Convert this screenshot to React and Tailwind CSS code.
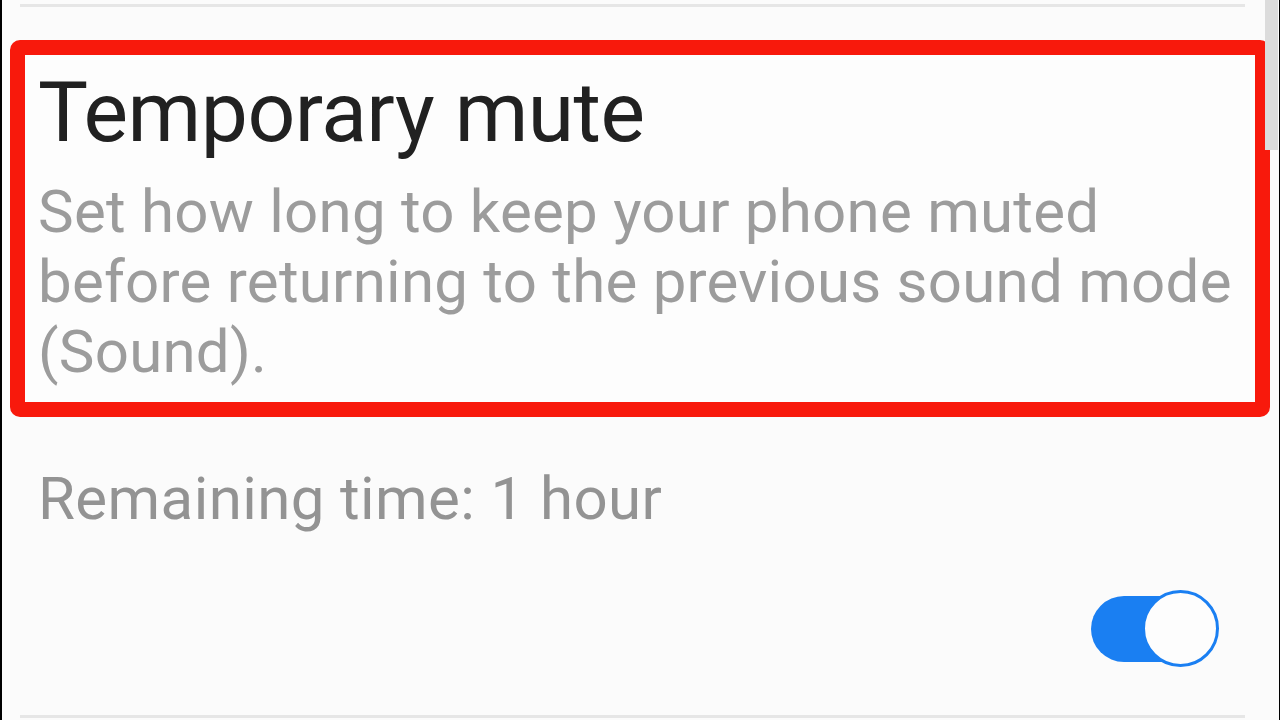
export default function App() {
  return (
    <div
      className="relative w-[1280px] h-[720px] overflow-hidden bg-[#fbfbfb] border-l-2 border-r border-black"
      style={{ fontFamily: 'Roboto, "Noto Sans", sans-serif' }}
    >
      {/* scrollbar */}
      <div className="absolute right-[1px] top-0 w-[13px] h-[150px] bg-[#dcdcdc]" />

      <div className="pt-[4px]">
        <div className="ml-[18px] w-[1225px] h-[3px] bg-[#e6e6e6]" />
      </div>

      <div className="mt-[33px] ml-[8px] w-[1260px] rounded-[10px] border-[15px] border-[#f8190c] bg-[#fdfdfd] px-[13px] pt-[16px] pb-[15px]">
        <h1 className="text-[84px] leading-[84px] text-[#212121] font-normal tracking-[-0.5px]">
          Temporary mute
        </h1>
        <p className="mt-[22px] text-[60px] leading-[70px] text-[#9c9c9c] tracking-[0.25px]">
          Set how long to keep your phone muted
          <br />
          before returning to the previous sound mode
          <br />
          (Sound).
        </p>
      </div>

      <div className="mt-[47px] pl-[36px] text-[60px] leading-[70px] text-[#939393] tracking-[0.4px]">
        Remaining time: 1 hour
      </div>

      <div className="mt-[56px] flex justify-end pr-[60px]">
        <div className="relative h-[77px] w-[128px] flex items-center">
          <div className="h-[66px] w-[108px] rounded-full bg-[#1a7ff2]" />
          <div className="absolute right-0 top-0 h-[77px] w-[77px] rounded-full border-[3px] border-[#1a7ff2] bg-[#fdfdfd]" />
        </div>
      </div>

      <div className="mt-[48px] ml-[18px] w-[1225px] h-[3px] bg-[#e6e6e6]" />
    </div>
  )
}
